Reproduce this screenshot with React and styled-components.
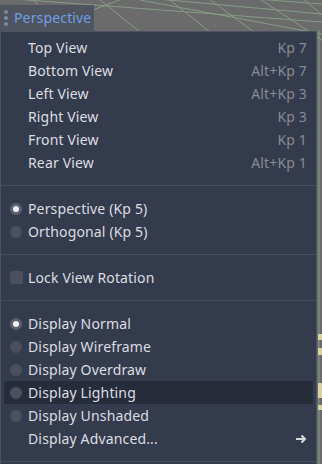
import React from "react"
import styled, { createGlobalStyle } from "styled-components"

const GlobalStyle = createGlobalStyle`
  html, body {
    margin: 0;
    padding: 0;
    background: #6b6b6b;
  }
  body {
    font-family: "Noto Sans", "DejaVu Sans", sans-serif;
  }
`

const groups = [
  [
    { label: "Top View", shortcut: "Kp 7" },
    { label: "Bottom View", shortcut: "Alt+Kp 7" },
    { label: "Left View", shortcut: "Alt+Kp 3" },
    { label: "Right View", shortcut: "Kp 3" },
    { label: "Front View", shortcut: "Kp 1" },
    { label: "Rear View", shortcut: "Alt+Kp 1" },
  ],
  [
    { label: "Perspective (Kp 5)", radio: true, checked: true },
    { label: "Orthogonal (Kp 5)", radio: true },
  ],
  [{ label: "Lock View Rotation", checkbox: true }],
  [
    { label: "Display Normal", radio: true, checked: true },
    { label: "Display Wireframe", radio: true },
    { label: "Display Overdraw", radio: true },
    { label: "Display Lighting", radio: true, hover: true },
    { label: "Display Unshaded", radio: true },
    { label: "Display Advanced...", submenu: true },
  ],
]

const Viewport = () => (
  <ViewportWrapper>
    <GridSvg width="322" height="464" viewBox="0 0 322 464">
      <g stroke="#8fae90" strokeWidth="1" opacity="0.75" fill="none">
        <line x1="30" y1="-4" x2="70" y2="40" />
        <line x1="95" y1="-4" x2="150" y2="40" />
        <line x1="165" y1="-4" x2="220" y2="40" />
        <line x1="205" y1="-4" x2="265" y2="40" />
        <line x1="255" y1="-4" x2="322" y2="40" />
        <line x1="300" y1="-4" x2="340" y2="30" />
        <line x1="0" y1="-2" x2="322" y2="22" />
        <line x1="80" y1="-8" x2="322" y2="14" />
        <line x1="140" y1="0" x2="322" y2="34" />
        <line x1="190" y1="-6" x2="322" y2="4" />
        <line x1="40" y1="30" x2="130" y2="-4" />
        <line x1="319" y1="30" x2="319" y2="464" />
      </g>
      <g fill="#d9d1a2">
        <rect x="318" y="334" width="4" height="6" />
        <rect x="318" y="348" width="4" height="7" />
        <rect x="318" y="383" width="4" height="15" />
        <rect x="318" y="405" width="4" height="5" />
      </g>
    </GridSvg>
    <Content>
      <ViewButton>
        <svg width="6" height="18" viewBox="0 0 6 18">
          <g fill="#7c8aa3">
            <circle cx="3" cy="3" r="2" />
            <circle cx="3" cy="9" r="2" />
            <circle cx="3" cy="15" r="2" />
          </g>
        </svg>
        <ButtonLabel>Perspective</ButtonLabel>
      </ViewButton>
      <Popup>
        {groups.map((group, gi) => (
          <React.Fragment key={gi}>
            {group.map((item) => (
              <Item key={item.label} $hover={item.hover}>
                <Indicator>
                  {item.radio && <Radio $checked={item.checked} />}
                  {item.checkbox && <Check />}
                </Indicator>
                <ItemLabel>{item.label}</ItemLabel>
                {item.shortcut && <Shortcut>{item.shortcut}</Shortcut>}
                {item.submenu && (
                  <svg width="12" height="12" viewBox="0 0 12 12">
                    <path
                      d="M1 6 H10 M6.5 2.5 L10 6 L6.5 9.5"
                      stroke="#d6d8dc"
                      strokeWidth="2"
                      fill="none"
                    />
                  </svg>
                )}
              </Item>
            ))}
            <Separator />
          </React.Fragment>
        ))}
      </Popup>
    </Content>
  </ViewportWrapper>
)

const App = () => (
  <>
    <GlobalStyle />
    <Viewport />
  </>
)

const ViewportWrapper = styled.div`
  position: relative;
  width: 322px;
  height: 464px;
  overflow: hidden;
  background: #6b6b6b;
`

const GridSvg = styled.svg`
  position: absolute;
  top: 0;
  left: 0;
`

const Content = styled.div`
  position: relative;
  display: flex;
  flex-direction: column;
  padding-top: 5px;
`

const ViewButton = styled.div`
  display: flex;
  align-items: center;
  gap: 5px;
  width: 94px;
  height: 26px;
  padding-left: 3px;
  box-sizing: border-box;
  background: #50545f;
`

const ButtonLabel = styled.span`
  font-size: 14px;
  color: #6f9fe6;
  line-height: 1;
  letter-spacing: 0.15px;
`

const Popup = styled.div`
  width: 317px;
  box-sizing: border-box;
  background: #343b4c;
  border: 1px solid #4b5365;
  padding: 4px 3px 0 3px;
`

const Item = styled.div`
  display: flex;
  align-items: center;
  height: 23px;
  padding-right: 6px;
  background: ${(p) => (p.$hover ? "#272c3a" : "transparent")};
`

const Indicator = styled.div`
  width: 24px;
  display: flex;
  justify-content: center;
`

const Radio = styled.span`
  width: 12px;
  height: 12px;
  border-radius: 50%;
  box-sizing: border-box;
  background: ${(p) => (p.$checked ? "#f2f2f2" : "#4a505e")};
  border: ${(p) => (p.$checked ? "3px solid #5a606e" : "none")};
`

const Check = styled.span`
  width: 13px;
  height: 13px;
  border-radius: 2px;
  background: #4a5060;
`

const ItemLabel = styled.span`
  flex: 1;
  font-size: 14px;
  letter-spacing: 0.15px;
  color: #dcdee2;
  white-space: nowrap;
`

const Shortcut = styled.span`
  font-size: 14px;
  letter-spacing: 0.15px;
  color: #878b95;
`

const Separator = styled.div`
  height: 23px;
  display: flex;
  align-items: center;
  &::after {
    content: "";
    flex: 1;
    height: 1px;
    background: #454c5e;
    margin: 0 -3px;
  }
`

export default App
